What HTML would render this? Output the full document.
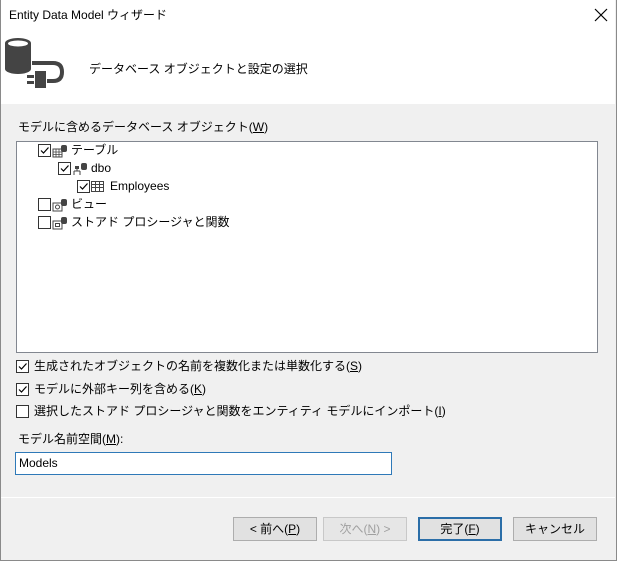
<!DOCTYPE html>
<html><head><meta charset="utf-8"><style>
*{margin:0;padding:0;box-sizing:border-box}
body{width:617px;height:561px;overflow:hidden;background:#f0f0f0;font-family:"Liberation Sans","Noto Sans CJK JP",sans-serif;font-size:12px;color:#000;position:relative}
.abs{position:absolute}
.win{position:absolute;left:0;top:0;width:617px;height:561px;border:1px solid #8a8a8a;border-top:none}
.top{position:absolute;left:1px;top:0;width:614px;height:104px;background:#fff}
.cb{position:absolute;width:13px;height:13px;border:1px solid #333;background:#fff}
.cb svg{position:absolute;left:0;top:0}
.t{position:absolute;white-space:nowrap;line-height:16px}
.btn{position:absolute;top:517px;width:84px;height:24px;border:1px solid #adadad;background:#e1e1e1;text-align:center;line-height:22px;font-size:12px}
u{text-decoration:underline}
</style></head><body>
<div class="top"></div>
<div class="win"></div>
<div class="t" style="left:9px;top:7px;font-size:12px">Entity Data Model ウィザード</div>
<svg class="abs" style="left:594px;top:8px" width="14" height="14"><path d="M1 1L13 13M13 1L1 13" stroke="#000" stroke-width="1.2"/></svg>
<svg class="abs" style="left:3px;top:34px" width="64" height="58">
<ellipse cx="15" cy="9" rx="13" ry="5" fill="#444"/>
<rect x="2" y="9" width="26" height="26" fill="#444"/>
<ellipse cx="15" cy="35" rx="13" ry="5" fill="#444"/>
<ellipse cx="15" cy="9.5" rx="10" ry="3" fill="#fff"/>
<path d="M29 29 H50 Q59 29 59 38 Q59 47 50 47 H44" stroke="#444" stroke-width="4" fill="none"/>
<rect x="32" y="37" width="11" height="17" fill="#444"/>
<rect x="24" y="41" width="7" height="3" fill="#444"/><rect x="24" y="47" width="7" height="3" fill="#444"/>
</svg>
<div class="t" style="left:89px;top:61px;font-size:12px">データベース オブジェクトと設定の選択</div>
<div class="t" style="left:18px;top:119px">モデルに含めるデータベース オブジェクト(<u>W</u>)</div>
<div class="abs" style="left:16px;top:141px;width:582px;height:212px;background:#fff;border:1px solid #828790"></div>

<div class="cb" style="left:38px;top:144px"><svg width="11" height="11"><path d="M2 5.5L4.5 8L9.5 2.5" stroke="#000" fill="none" stroke-width="1.2"/></svg></div>
<svg class="abs" style="left:52px;top:144px" width="16" height="14"><rect x="1" y="5" width="9" height="8" fill="none" stroke="#444"/><path d="M1 8H10M1 10.5H10M4 5V13M7 5V13" stroke="#444" stroke-width=".8"/><rect x="9" y="1" width="6" height="7" rx="2" fill="#444"/></svg>
<div class="t" style="left:71px;top:142px">テーブル</div>

<div class="cb" style="left:58px;top:162px"><svg width="11" height="11"><path d="M2 5.5L4.5 8L9.5 2.5" stroke="#000" fill="none" stroke-width="1.2"/></svg></div>
<svg class="abs" style="left:72px;top:162px" width="16" height="14"><path d="M5 6V9M2 9H8M2 9V13M8 9V13" stroke="#444" fill="none"/><rect x="3" y="4" width="4" height="3" fill="#444"/><rect x="9" y="1" width="6" height="7" rx="2" fill="#444"/></svg>
<div class="t" style="left:91px;top:160px">dbo</div>

<div class="cb" style="left:77px;top:180px"><svg width="11" height="11"><path d="M2 5.5L4.5 8L9.5 2.5" stroke="#000" fill="none" stroke-width="1.2"/></svg></div>
<svg class="abs" style="left:91px;top:180px" width="14" height="13"><rect x="0.5" y="1.5" width="12" height="10" fill="none" stroke="#444"/><path d="M0.5 4.5H12.5M0.5 7.5H12.5M4.5 1.5V11.5M8.5 1.5V11.5" stroke="#444"/></svg>
<div class="t" style="left:110px;top:178px">Employees</div>

<div class="cb" style="left:38px;top:198px"></div>
<svg class="abs" style="left:52px;top:198px" width="16" height="14"><rect x="1" y="5" width="9" height="8" fill="none" stroke="#444"/><circle cx="5.5" cy="9" r="2" fill="none" stroke="#444"/><rect x="9" y="1" width="6" height="7" rx="2" fill="#444"/></svg>
<div class="t" style="left:71px;top:196px">ビュー</div>

<div class="cb" style="left:38px;top:216px"></div>
<svg class="abs" style="left:52px;top:216px" width="16" height="14"><rect x="1" y="5" width="9" height="8" fill="none" stroke="#444"/><rect x="3.5" y="7.5" width="4" height="3" fill="none" stroke="#444"/><rect x="9" y="1" width="6" height="7" rx="2" fill="#444"/></svg>
<div class="t" style="left:71px;top:214px">ストアド プロシージャと関数</div>

<div class="cb" style="left:16px;top:360px"><svg width="11" height="11"><path d="M2 5.5L4.5 8L9.5 2.5" stroke="#000" fill="none" stroke-width="1.2"/></svg></div>
<div class="t" style="left:34px;top:358px">生成されたオブジェクトの名前を複数化または単数化する(<u>S</u>)</div>
<div class="cb" style="left:16px;top:383px"><svg width="11" height="11"><path d="M2 5.5L4.5 8L9.5 2.5" stroke="#000" fill="none" stroke-width="1.2"/></svg></div>
<div class="t" style="left:34px;top:381px">モデルに外部キー列を含める(<u>K</u>)</div>
<div class="cb" style="left:16px;top:405px"></div>
<div class="t" style="left:34px;top:403px">選択したストアド プロシージャと関数をエンティティ モデルにインポート(<u>I</u>)</div>

<div class="t" style="left:18px;top:431px">モデル名前空間(<u>M</u>):</div>
<div class="abs" style="left:15px;top:452px;width:377px;height:23px;background:#fff;border:1px solid #2e79b8"></div>
<div class="t" style="left:19px;top:455px">Models</div>

<div class="abs" style="left:1px;top:497px;width:614px;height:1px;background:#fff"></div>

<div class="btn" style="left:233px">&lt; 前へ(<u>P</u>)</div>
<div class="btn" style="left:323px;color:#a0a0a0;border-color:#c8c8c8;background:#e6e6e6">次へ(<u>N</u>) &gt;</div>
<div class="btn" style="left:418px;border:2px solid #2b6ea8;line-height:20px">完了(<u>F</u>)</div>
<div class="btn" style="left:513px">キャンセル</div>
</body></html>
